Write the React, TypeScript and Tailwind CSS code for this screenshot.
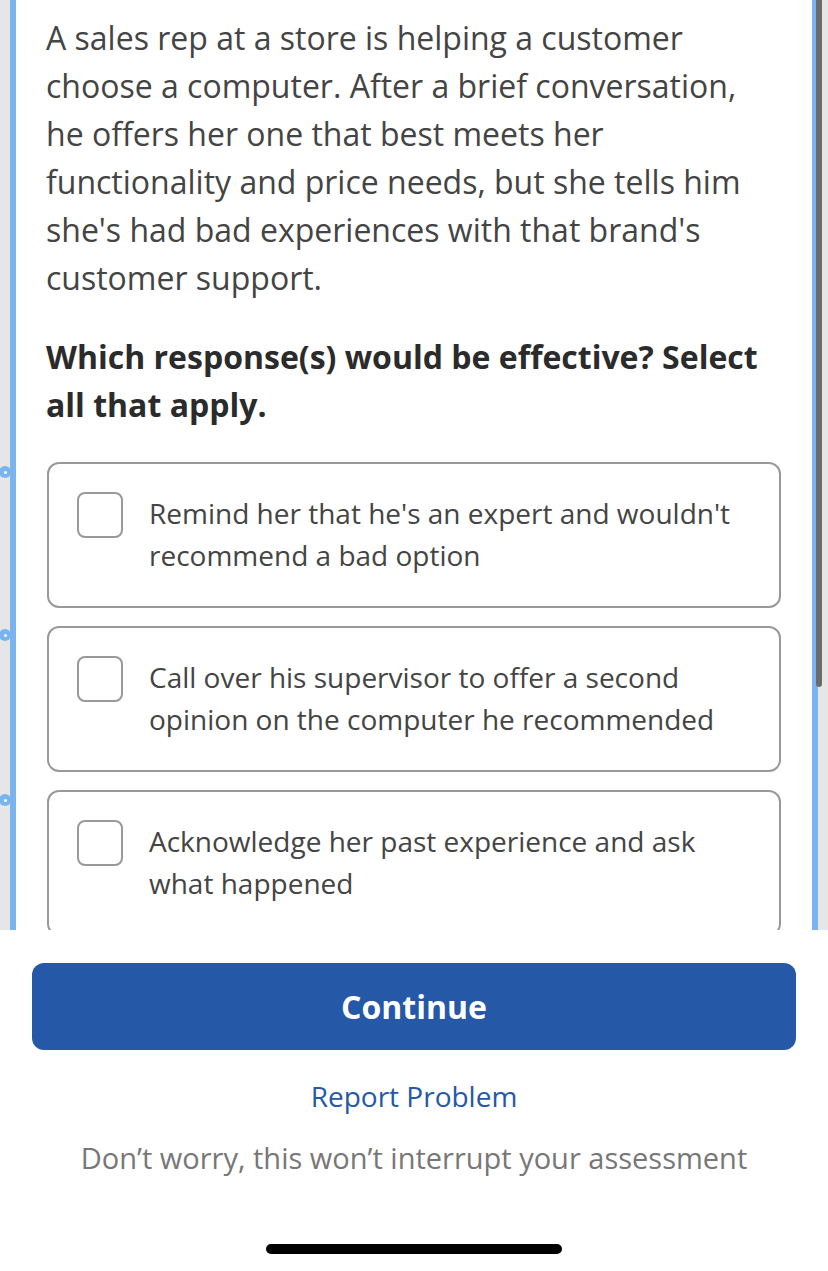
import React from "react";

const options = [
  "Remind her that he's an expert and wouldn't recommend a bad option",
  "Call over his supervisor to offer a second opinion on the computer he recommended",
  "Acknowledge her past experience and ask what happened",
];

function Handle({ top }: { top: number }) {
  return (
    <div
      className="absolute left-[-1px] w-[12px] h-[12px] rounded-full bg-[#79b4ef] flex items-center justify-center"
      style={{ top }}
    >
      <div className="w-[3px] h-[3px] rounded-full bg-white" />
    </div>
  );
}

export default function App() {
  return (
    <div
      className="w-[828px] h-[1271px] bg-white flex flex-col overflow-hidden"
      style={{ fontFamily: '"Open Sans", "Noto Sans", sans-serif' }}
    >
      <div className="relative h-[930px] shrink-0 flex overflow-hidden">
        <div className="w-[10px] bg-[#e6e6e6]" />
        <div className="w-[6px] bg-[#79b4ef]" />
        <div className="flex-1 bg-white pl-[30px] pr-[31px] pt-[14px]">
          <p className="text-[32px] leading-[48px] text-[#444]">
            A sales rep at a store is helping a customer choose a computer. After a brief conversation, he offers her one that best meets her functionality and price needs, but she tells him she's had bad experiences with that brand's customer support.
          </p>
          <p className="mt-[31px] text-[32px] leading-[48px] font-bold text-[#2b2b2b]">
            Which response(s) would be effective? Select all that apply.
          </p>
          <div className="mt-[33px] pl-[1px] flex flex-col gap-[18px]">
            {options.map((o) => (
              <div
                key={o}
                className="h-[146px] shrink-0 rounded-[12px] border-2 border-[#999] pl-[28px] pr-[20px] pt-[28px] flex items-start gap-[26px]"
              >
                <div className="w-[46px] h-[46px] shrink-0 rounded-[8px] border-2 border-[#999] bg-white" />
                <div className="text-[28px] leading-[42px] text-[#444]">{o}</div>
              </div>
            ))}
          </div>
        </div>
        <div className="w-[6px] bg-[#79b4ef]" />
        <div className="w-[10px] bg-[#e6e6e6]" />
        <div className="absolute left-[816px] top-0 w-[6px] h-[687px] rounded-b-[3px] bg-[#6b6b6b]" />
        <Handle top={466} />
        <Handle top={629} />
        <Handle top={794} />
      </div>
      <div className="px-[32px] pt-[33px]">
        <button className="w-full h-[87px] rounded-[12px] bg-[#2558a6] text-white text-[32px] font-bold">
          Continue
        </button>
      </div>
      <div className="mt-[28px] text-center text-[28px] leading-[36px] text-[#2558a6]">
        Report Problem
      </div>
      <div className="mt-[26px] text-center text-[29px] leading-[36px] text-[#777]">
        Don’t worry, this won’t interrupt your assessment
      </div>
      <div className="mt-[68px] flex justify-center">
        <div className="w-[296px] h-[10px] rounded-full bg-black" />
      </div>
    </div>
  );
}
